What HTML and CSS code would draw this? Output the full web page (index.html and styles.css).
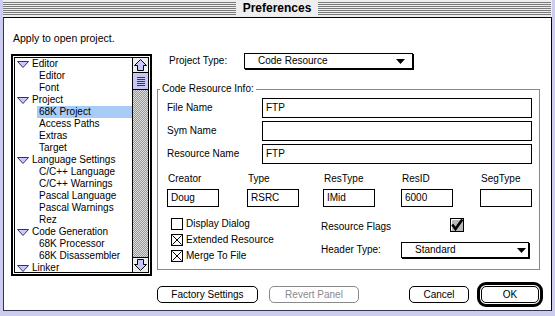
FILE: index.html
```html
<!DOCTYPE html>
<html>
<head>
<meta charset="utf-8">
<link rel="stylesheet" href="styles.css">
</head>
<body>
<div class="window">
  <div class="titlebar">
    <span class="stripes"></span>
    <span class="title">Preferences</span>
    <span class="stripes"></span>
  </div>
  <div class="content">
    <p class="apply">Apply to open project.</p>
    <div class="main">
      <div class="listring">
        <div class="list">
          <ul class="items">
            <li class="grp"><svg class="tri" width="12" height="7" viewBox="0 0 12 7"><polygon points="0.5,0.5 11.5,0.5 6,6.5" fill="#c8c8ff" stroke="#333366" stroke-width="1"/></svg>Editor</li>
            <li class="sub">Editor</li>
            <li class="sub">Font</li>
            <li class="grp"><svg class="tri" width="12" height="7" viewBox="0 0 12 7"><polygon points="0.5,0.5 11.5,0.5 6,6.5" fill="#c8c8ff" stroke="#333366" stroke-width="1"/></svg>Project</li>
            <li class="sub sel">68K Project</li>
            <li class="sub">Access Paths</li>
            <li class="sub">Extras</li>
            <li class="sub">Target</li>
            <li class="grp"><svg class="tri" width="12" height="7" viewBox="0 0 12 7"><polygon points="0.5,0.5 11.5,0.5 6,6.5" fill="#c8c8ff" stroke="#333366" stroke-width="1"/></svg>Language Settings</li>
            <li class="sub">C/C++ Language</li>
            <li class="sub">C/C++ Warnings</li>
            <li class="sub">Pascal Language</li>
            <li class="sub">Pascal Warnings</li>
            <li class="sub">Rez</li>
            <li class="grp"><svg class="tri" width="12" height="7" viewBox="0 0 12 7"><polygon points="0.5,0.5 11.5,0.5 6,6.5" fill="#c8c8ff" stroke="#333366" stroke-width="1"/></svg>Code Generation</li>
            <li class="sub">68K Processor</li>
            <li class="sub">68K Disassembler</li>
            <li class="grp"><svg class="tri" width="12" height="7" viewBox="0 0 12 7"><polygon points="0.5,0.5 11.5,0.5 6,6.5" fill="#c8c8ff" stroke="#333366" stroke-width="1"/></svg>Linker</li>
          </ul>
          <div class="scrollbar">
            <div class="sb-btn sb-up"><svg width="13" height="12" viewBox="0 0 13 12"><polygon points="6.5,0.5 12.5,6.5 9.5,6.5 9.5,11.5 3.5,11.5 3.5,6.5 0.5,6.5" fill="#c8c8ff" stroke="#000" stroke-width="1"/></svg></div>
            <div class="sb-track"><div class="sb-thumb"><span class="grip"></span></div></div>
            <div class="sb-btn sb-down"><svg width="13" height="12" viewBox="0 0 13 12"><polygon points="6.5,11.5 12.5,5.5 9.5,5.5 9.5,0.5 3.5,0.5 3.5,5.5 0.5,5.5" fill="#c8c8ff" stroke="#000" stroke-width="1"/></svg></div>
          </div>
        </div>
      </div>
      <div class="panel">
        <div class="ptype">
          <span class="ptype-label">Project Type:</span>
          <div class="popup popup-wide"><span>Code Resource</span><svg class="parrow" width="9" height="5" viewBox="0 0 9 5"><polygon points="0,0 9,0 4.5,5" fill="#000"/></svg></div>
        </div>
        <fieldset class="group">
          <legend>Code Resource Info:</legend>
          <div class="frow"><span class="flabel">File Name</span><div class="field wide">FTP</div></div>
          <div class="frow"><span class="flabel">Sym Name</span><div class="field wide"></div></div>
          <div class="frow"><span class="flabel">Resource Name</span><div class="field wide">FTP</div></div>
          <div class="attrs">
            <div class="attr"><span class="alabel">Creator</span><div class="field small">Doug</div></div>
            <div class="attr"><span class="alabel">Type</span><div class="field small">RSRC</div></div>
            <div class="attr"><span class="alabel">ResType</span><div class="field small">IMid</div></div>
            <div class="attr"><span class="alabel">ResID</span><div class="field small">6000</div></div>
            <div class="attr"><span class="alabel">SegType</span><div class="field small"></div></div>
          </div>
          <div class="lower">
            <div class="checks">
              <div class="check"><svg class="cb" width="12" height="12" viewBox="0 0 12 12"><rect x="0.5" y="0.5" width="11" height="11" fill="#fff" stroke="#000"/></svg>Display Dialog</div>
              <div class="check"><svg class="cb" width="12" height="12" viewBox="0 0 12 12"><rect x="0.5" y="0.5" width="11" height="11" fill="#fff" stroke="#000"/><path d="M1.5 1.5 L10.5 10.5 M10.5 1.5 L1.5 10.5" stroke="#000" stroke-width="1"/></svg>Extended Resource</div>
              <div class="check"><svg class="cb" width="12" height="12" viewBox="0 0 12 12"><rect x="0.5" y="0.5" width="11" height="11" fill="#fff" stroke="#000"/><path d="M1.5 1.5 L10.5 10.5 M10.5 1.5 L1.5 10.5" stroke="#000" stroke-width="1"/></svg>Merge To File</div>
            </div>
            <div class="rcol">
              <div class="flags"><span class="flags-label">Resource Flags</span><svg class="flagbtn" width="14" height="14" viewBox="0 0 14 14"><rect x="0.5" y="0.5" width="13" height="13" fill="#b8b8b8" stroke="#000"/><path d="M1.5 12.5 V1.5 H12.5" fill="none" stroke="#fff"/><path d="M3 7.5 L5.5 11 L11.5 2.5" fill="none" stroke="#000" stroke-width="2.6" stroke-linecap="square"/></svg></div>
              <div class="header"><span class="hlabel">Header Type:</span><div class="popup popup-std"><span>Standard</span><svg class="parrow" width="9" height="5" viewBox="0 0 9 5"><polygon points="0,0 9,0 4.5,5" fill="#000"/></svg></div></div>
            </div>
          </div>
        </fieldset>
      </div>
    </div>
    <div class="buttons">
      <div class="btn b-factory">Factory Settings</div>
      <div class="btn b-revert">Revert Panel</div>
      <div class="btn b-cancel">Cancel</div>
      <div class="okring"><div class="btn b-ok">OK</div></div>
    </div>
  </div>
</div>
</body>
</html>
```

FILE: styles.css
```css
* { box-sizing: border-box; }
html, body { margin: 0; padding: 0; }
body {
  width: 555px;
  height: 316px;
  overflow: hidden;
  font-family: "Liberation Sans", Arial, sans-serif;
  font-size: 10px;
  line-height: 12px;
  color: #000;
}
.window {
  width: 555px;
  height: 316px;
  background: #ccccee;
  display: flex;
  flex-direction: column;
}
.titlebar {
  height: 17px;
  margin: 0 3px;
  padding: 2px 1px 2px 0;
  background: #eeeeee;
  display: flex;
  align-items: center;
}
.stripes {
  flex: 1;
  height: 13px;
  background: repeating-linear-gradient(to bottom, #7a7a7a 0 1px, #eeeeee 1px 2px);
}
.title {
  font-weight: bold;
  font-size: 12px;
  padding: 0 7px;
  line-height: 13px;
}
.content {
  margin: 0 3px 5px 3px;
  height: 294px;
  background: #fff;
  border: 1px solid #000;
  border-left-color: #333355;
  border-bottom-color: #333355;
  display: flex;
  flex-direction: column;
}
.apply {
  margin: 14px 0 0 9px;
  height: 12px;
  font-size: 10.5px;
}
.main {
  display: flex;
  align-items: flex-start;
  margin-top: 9px;
}
.listring {
  margin: 1px 0 0 7px;
  width: 141px;
  height: 222px;
  border: 2px solid #000;
  padding: 1px;
  background: #fff;
}
.list {
  width: 100%;
  height: 100%;
  border: 1px solid #000;
  display: flex;
}
.items {
  list-style: none;
  margin: 0;
  padding: 0;
  flex: 1;
  overflow: hidden;
}
.items li {
  height: 12px;
  line-height: 12px;
  white-space: nowrap;
  display: flex;
  align-items: center;
}
.grp { padding-left: 2px; }
.tri { margin-right: 3px; flex: none; }
.sub { margin-left: 22px; padding-left: 2px; }
.sel { background: #a8ccf8; }
.scrollbar {
  width: 16px;
  border-left: 1px solid #000;
  display: flex;
  flex-direction: column;
}
.sb-btn {
  height: 15px;
  background: #eeeeee;
  display: flex;
  align-items: center;
  justify-content: center;
  flex: none;
}
.sb-up { border-bottom: 1px solid #000; }
.sb-down { border-top: 1px solid #000; }
.sb-track {
  flex: 1;
  background-color: #ddd;
  background-image: conic-gradient(#999 25%, #ddd 0 50%, #999 0 75%, #ddd 0);
  background-size: 2px 2px;
}
.sb-thumb {
  height: 17px;
  background: #c8c8f4;
  border-bottom: 1px solid #000;
  display: flex;
  align-items: center;
  justify-content: center;
}
.grip {
  width: 8px;
  height: 9px;
  background: repeating-linear-gradient(to bottom, #333366 0 1px, transparent 1px 2px);
}
.panel {
  margin-left: 5px;
  display: flex;
  flex-direction: column;
}
.ptype {
  display: flex;
  align-items: center;
  height: 16px;
  margin-bottom: 14px;
  padding-left: 12px;
}
.ptype-label { width: 75px; }
.popup {
  height: 16px;
  border: 1px solid #000;
  box-shadow: 1px 1px 0 #000;
  display: flex;
  align-items: center;
  padding-left: 13px;
  background: #fff;
}
.popup-wide { width: 169px; }
.popup-std { width: 128px; }
.parrow { margin-left: auto; margin-right: 7px; }
.popup-std .parrow { margin-right: 2px; }
.group {
  margin: 0;
  width: 383px;
  height: 187px;
  border: 1px solid #8a8a8a;
  padding: 3px 7px 0 9px;
}
.group legend {
  padding: 0 2px;
  margin-left: -7px;
  line-height: 12px;
}
.frow {
  display: flex;
  align-items: center;
  height: 20px;
  margin-bottom: 3px;
}
.flabel { width: 95px; }
.field {
  border: 1px solid #000;
  padding-left: 3px;
  display: flex;
  align-items: center;
  background: #fff;
}
.wide { width: 270px; height: 20px; }
.attrs {
  display: grid;
  grid-template-columns: 80px 76px 78px 79px 52px;
  margin-top: 9px;
}
.attr { display: flex; flex-direction: column; }
.alabel { height: 12px; padding-left: 1px; margin-bottom: 4px; }
.small { width: 52px; height: 18px; }
.lower {
  display: flex;
  margin-top: 9px;
}
.checks {
  width: 154px;
  padding-left: 4px;
  display: flex;
  flex-direction: column;
}
.check {
  height: 16px;
  display: flex;
  align-items: center;
}
.cb { margin-right: 3px; flex: none; }
.rcol {
  display: flex;
  flex-direction: column;
}
.flags {
  height: 17px;
  display: flex;
  align-items: center;
}
.flags-label { width: 129px; padding-top: 4px; }
.header {
  display: flex;
  align-items: center;
  margin-top: 9px;
}
.hlabel { width: 80px; }
.buttons {
  display: flex;
  align-items: center;
  margin-top: 6px;
  padding: 0 8px 0 153px;
}
.btn {
  height: 17px;
  border: 1px solid #000;
  border-radius: 5px;
  display: flex;
  align-items: center;
  justify-content: center;
  background: #fff;
}
.b-factory { width: 101px; }
.b-revert { width: 90px; margin-left: 11px; color: #8a8a8a; border-color: #8a8a8a; }
.b-cancel { width: 60px; margin-left: auto; }
.okring {
  margin-left: 8px;
  border: 3px solid #000;
  border-radius: 9px;
  padding: 1px;
}
.b-ok { width: 58px; }
```
